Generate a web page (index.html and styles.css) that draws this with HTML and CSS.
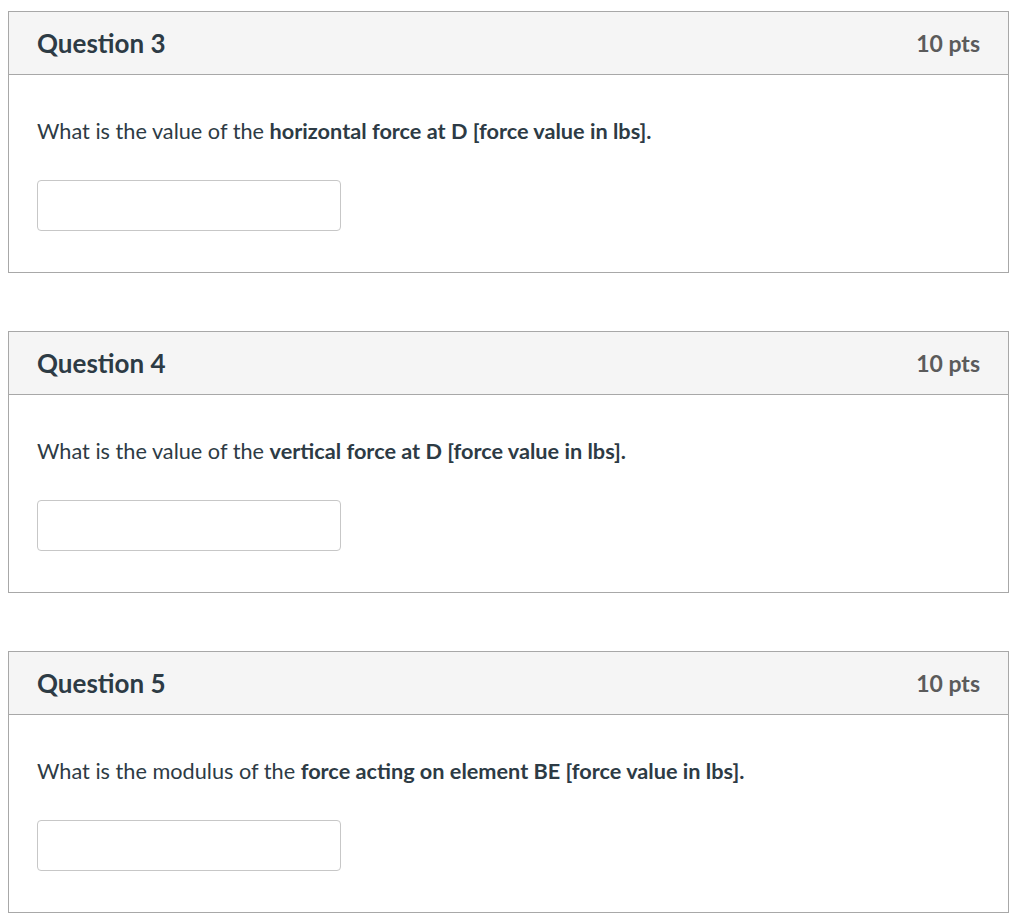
FILE: index.html
```html
<!DOCTYPE html>
<html>
<head>
<meta charset="utf-8">
<link rel="stylesheet" href="styles.css">
</head>
<body>
<div class="quiz">
  <div class="question">
    <div class="q-header">
      <span class="q-title">Question 3</span>
      <span class="q-pts">10 pts</span>
    </div>
    <div class="q-body">
      <p class="q-text">What is the value of the <strong>horizontal force at D [force value in lbs].</strong></p>
      <input class="q-input" type="text">
    </div>
  </div>
  <div class="question">
    <div class="q-header">
      <span class="q-title">Question 4</span>
      <span class="q-pts">10 pts</span>
    </div>
    <div class="q-body">
      <p class="q-text">What is the value of the <strong>vertical force at D [force value in lbs].</strong></p>
      <input class="q-input" type="text">
    </div>
  </div>
  <div class="question">
    <div class="q-header">
      <span class="q-title">Question 5</span>
      <span class="q-pts">10 pts</span>
    </div>
    <div class="q-body">
      <p class="q-text">What is the modulus of the <strong>force acting on element BE [force value in lbs].</strong></p>
      <input class="q-input" type="text">
    </div>
  </div>
</div>
</body>
</html>
```
FILE: styles.css
```css
html, body {
  margin: 0;
  padding: 0;
  background: #ffffff;
}
body {
  font-family: Lato, "Open Sans", sans-serif;
  color: #2d3b45;
}
.quiz {
  padding: 11px 0 0 8px;
  display: flex;
  flex-direction: column;
  gap: 58px;
}
.question {
  width: 999px;
  border: 1px solid #a8a8a8;
  background: #fff;
}
.q-header {
  height: 62px;
  background: #f5f5f5;
  border-bottom: 1px solid #a8a8a8;
  display: flex;
  align-items: center;
  justify-content: space-between;
  padding: 0 28px;
}
.q-title {
  font-size: 26px;
  font-weight: 700;
  color: #2d3b45;
}
.q-pts {
  font-size: 23px;
  font-weight: 700;
  color: #5b5b5b;
}
.q-body {
  height: 197px;
  padding: 0 28px;
  box-sizing: border-box;
  padding-top: 41px;
}
.q-text {
  margin: 0;
  font-size: 21.7px;
  line-height: 30px;
  color: #2d3b45;
}
.q-text strong {
  font-weight: 700;
}
.q-input {
  display: block;
  margin-top: 34px;
  width: 304px;
  height: 51px;
  box-sizing: border-box;
  border: 1px solid #c7c7c7;
  border-radius: 4px;
  background: #fff;
  padding: 0 8px;
}
```
